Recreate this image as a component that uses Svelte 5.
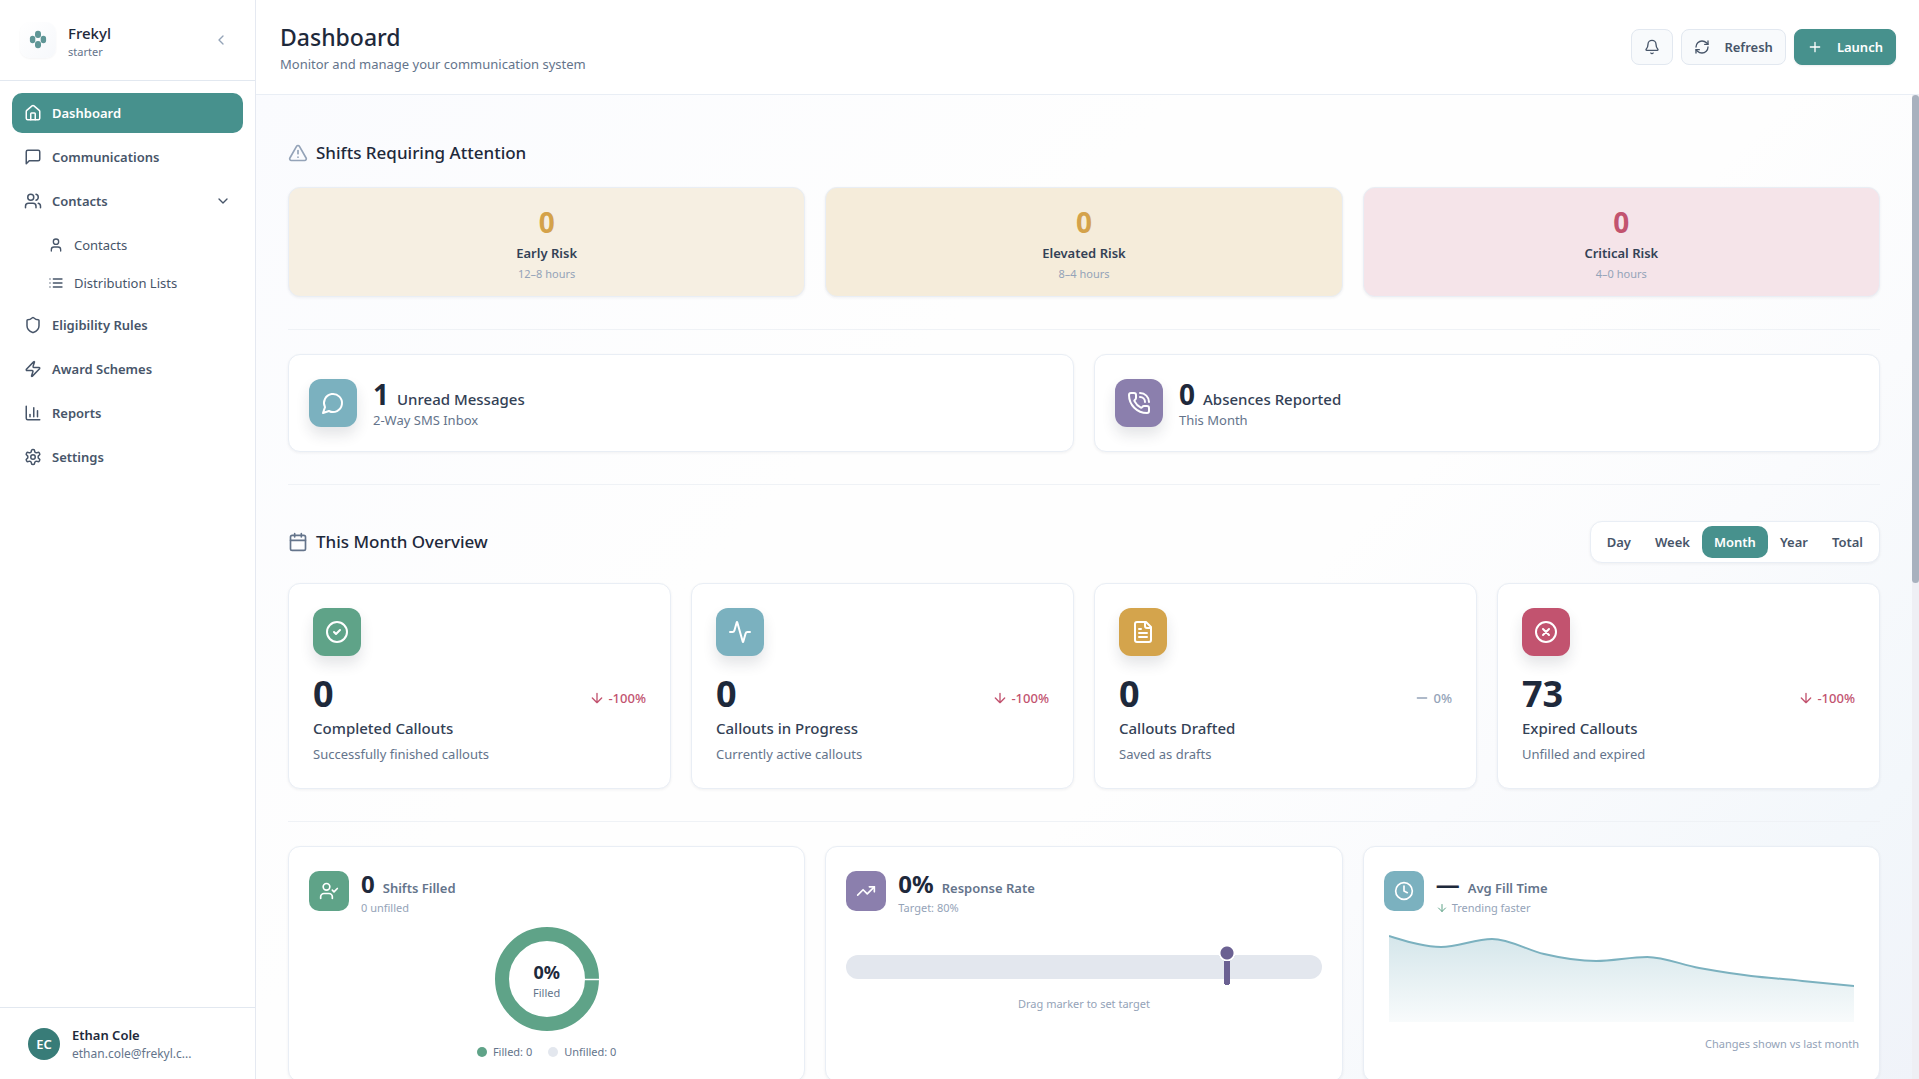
<script lang="ts">
	const icons: Record<string, string> = {
		home: '<path d="M15 21v-8a1 1 0 0 0-1-1h-4a1 1 0 0 0-1 1v8"/><path d="M3 10a2 2 0 0 1 .709-1.528l7-5.999a2 2 0 0 1 2.582 0l7 5.999A2 2 0 0 1 21 10v9a2 2 0 0 1-2 2H5a2 2 0 0 1-2-2z"/>',
		message: '<path d="M21 15a2 2 0 0 1-2 2H7l-4 4V5a2 2 0 0 1 2-2h14a2 2 0 0 1 2 2z"/>',
		users: '<path d="M16 21v-2a4 4 0 0 0-4-4H6a4 4 0 0 0-4 4v2"/><circle cx="9" cy="7" r="4"/><path d="M22 21v-2a4 4 0 0 0-3-3.87"/><path d="M16 3.13a4 4 0 0 1 0 7.75"/>',
		user: '<path d="M19 21v-2a4 4 0 0 0-4-4H9a4 4 0 0 0-4 4v2"/><circle cx="12" cy="7" r="4"/>',
		list: '<path d="M3 12h.01M3 18h.01M3 6h.01M8 12h13M8 18h13M8 6h13"/>',
		shield: '<path d="M20 13c0 5-3.5 7.5-7.66 8.95a1 1 0 0 1-.67-.01C7.5 20.5 4 18 4 13V6a1 1 0 0 1 1-1c2 0 4.5-1.2 6.24-2.72a1.17 1.17 0 0 1 1.52 0C14.51 3.81 17 5 19 5a1 1 0 0 1 1 1z"/>',
		zap: '<path d="M4 14a1 1 0 0 1-.78-1.63l9.9-10.2a.5.5 0 0 1 .86.46l-1.92 6.02A1 1 0 0 0 13 10h7a1 1 0 0 1 .78 1.63l-9.9 10.2a.5.5 0 0 1-.86-.46l1.92-6.02A1 1 0 0 0 11 14z"/>',
		chart: '<path d="M3 3v16a2 2 0 0 0 2 2h16"/><path d="M18 17V9"/><path d="M13 17V5"/><path d="M8 17v-3"/>',
		settings: '<path d="M12.22 2h-.44a2 2 0 0 0-2 2v.18a2 2 0 0 1-1 1.73l-.43.25a2 2 0 0 1-2 0l-.15-.08a2 2 0 0 0-2.73.73l-.22.38a2 2 0 0 0 .73 2.73l.15.1a2 2 0 0 1 1 1.72v.51a2 2 0 0 1-1 1.74l-.15.09a2 2 0 0 0-.73 2.73l.22.38a2 2 0 0 0 2.73.73l.15-.08a2 2 0 0 1 2 0l.43.25a2 2 0 0 1 1 1.73V20a2 2 0 0 0 2 2h.44a2 2 0 0 0 2-2v-.18a2 2 0 0 1 1-1.73l.43-.25a2 2 0 0 1 2 0l.15.08a2 2 0 0 0 2.73-.73l.22-.39a2 2 0 0 0-.73-2.73l-.15-.08a2 2 0 0 1-1-1.74v-.5a2 2 0 0 1 1-1.74l.15-.09a2 2 0 0 0 .73-2.73l-.22-.38a2 2 0 0 0-2.73-.73l-.15.08a2 2 0 0 1-2 0l-.43-.25a2 2 0 0 1-1-1.73V4a2 2 0 0 0-2-2z"/><circle cx="12" cy="12" r="3"/>',
		bell: '<path d="M10.268 21a2 2 0 0 0 3.464 0"/><path d="M3.262 15.326A1 1 0 0 0 4 17h16a1 1 0 0 0 .74-1.673C19.41 13.956 18 12.499 18 8A6 6 0 0 0 6 8c0 4.499-1.411 5.956-2.738 7.326"/>',
		refresh: '<path d="M3 12a9 9 0 0 1 9-9 9.75 9.75 0 0 1 6.74 2.74L21 8"/><path d="M21 3v5h-5"/><path d="M21 12a9 9 0 0 1-9 9 9.75 9.75 0 0 1-6.74-2.74L3 16"/><path d="M8 16H3v5"/>',
		plus: '<path d="M5 12h14M12 5v14"/>',
		alert: '<path d="m21.73 18-8-14a2 2 0 0 0-3.48 0l-8 14A2 2 0 0 0 4 21h16a2 2 0 0 0 1.73-3"/><path d="M12 9v4"/><path d="M12 17h.01"/>',
		bubble: '<path d="M7.9 20A9 9 0 1 0 4 16.1L2 22Z"/>',
		phone: '<path d="M13 2a9 9 0 0 1 9 9"/><path d="M13 6a5 5 0 0 1 5 5"/><path d="M13.832 16.568a1 1 0 0 0 1.213-.303l.355-.465A2 2 0 0 1 17 15h3a2 2 0 0 1 2 2v3a2 2 0 0 1-2 2A18 18 0 0 1 2 4a2 2 0 0 1 2-2h3a2 2 0 0 1 2 2v3a2 2 0 0 1-.8 1.6l-.468.351a1 1 0 0 0-.292 1.233 14 14 0 0 0 6.392 6.384"/>',
		calendar: '<path d="M8 2v4M16 2v4"/><rect width="18" height="18" x="3" y="4" rx="2"/><path d="M3 10h18"/>',
		check: '<circle cx="12" cy="12" r="10"/><path d="m9 12 2 2 4-4"/>',
		activity: '<path d="M22 12h-2.48a2 2 0 0 0-1.93 1.46l-2.35 8.36a.25.25 0 0 1-.48 0L9.24 2.18a.25.25 0 0 0-.48 0l-2.35 8.36A2 2 0 0 1 4.49 12H2"/>',
		file: '<path d="M15 2H6a2 2 0 0 0-2 2v16a2 2 0 0 0 2 2h12a2 2 0 0 0 2-2V7Z"/><path d="M14 2v4a2 2 0 0 0 2 2h4"/><path d="M10 9H8M16 13H8M16 17H8"/>',
		cancel: '<circle cx="12" cy="12" r="10"/><path d="m15 9-6 6M9 9l6 6"/>',
		userCheck: '<path d="m16 11 2 2 4-4"/><path d="M16 21v-2a4 4 0 0 0-4-4H6a4 4 0 0 0-4 4v2"/><circle cx="9" cy="7" r="4"/>',
		trend: '<path d="M16 7h6v6"/><path d="m22 7-8.5 8.5-5-5L2 17"/>',
		clock: '<circle cx="12" cy="12" r="10"/><path d="M12 6v6l4 2"/>',
		down: '<path d="M12 5v14M19 12l-7 7-7-7"/>',
		minus: '<path d="M5 12h14"/>',
		chevronLeft: '<path d="m15 18-6-6 6-6"/>',
		chevronDown: '<path d="m6 9 6 6 6-6"/>'
	};

	const topNav = [
		{ label: 'Dashboard', icon: 'home' },
		{ label: 'Communications', icon: 'message' }
	];
	const contactsNav = [
		{ label: 'Contacts', icon: 'user' },
		{ label: 'Distribution Lists', icon: 'list' }
	];
	const bottomNav = [
		{ label: 'Eligibility Rules', icon: 'shield' },
		{ label: 'Award Schemes', icon: 'zap' },
		{ label: 'Reports', icon: 'chart' },
		{ label: 'Settings', icon: 'settings' }
	];

	const risks = [
		{ level: 'early', label: 'Early Risk', window: '12–8 hours', count: 0 },
		{ level: 'elevated', label: 'Elevated Risk', window: '8–4 hours', count: 0 },
		{ level: 'critical', label: 'Critical Risk', window: '4–0 hours', count: 0 }
	];

	const summaries = [
		{ count: 1, label: 'Unread Messages', note: '2-Way SMS Inbox', icon: 'bubble', color: 'blue' },
		{ count: 0, label: 'Absences Reported', note: 'This Month', icon: 'phone', color: 'purple' }
	];

	const stats = [
		{ count: 0, label: 'Completed Callouts', note: 'Successfully finished callouts', icon: 'check', color: 'green', change: -100 },
		{ count: 0, label: 'Callouts in Progress', note: 'Currently active callouts', icon: 'activity', color: 'blue', change: -100 },
		{ count: 0, label: 'Callouts Drafted', note: 'Saved as drafts', icon: 'file', color: 'gold', change: 0 },
		{ count: 73, label: 'Expired Callouts', note: 'Unfilled and expired', icon: 'cancel', color: 'red', change: -100 }
	];

	const periods = ['Day', 'Week', 'Month', 'Year', 'Total'];

	let activeNav = $state('Dashboard');
	let period = $state('Month');
	let contactsOpen = $state(true);
	let target = $state(80);

	const trendLine =
		'M0 11C17 16 35 22 52 22S86 14 103 14S138 25 155 29S190 36 207 36S241 32 258 32S293 40 310 43S345 49 362 51S396 54 413 56L465 61';
</script>

{#snippet icon(name: string, size: number)}
	<svg
		class="icon"
		width={size}
		height={size}
		viewBox="0 0 24 24"
		fill="none"
		stroke="currentColor"
		stroke-width="2"
		stroke-linecap="round"
		stroke-linejoin="round"
		aria-hidden="true"
	>
		{@html icons[name]}
	</svg>
{/snippet}

{#snippet navItem(item: { label: string; icon: string })}
	<button class="nav-item" class:active={activeNav === item.label} onclick={() => (activeNav = item.label)}>
		{@render icon(item.icon, 18)}
		<span>{item.label}</span>
	</button>
{/snippet}

<div class="app">
	<aside class="sidebar">
		<div class="brand">
			<div class="logo">
				<svg width="20" height="20" viewBox="0 0 20 20" aria-hidden="true">
					<g fill="#5f9696">
						<rect x="7" y="0.8" width="6" height="7.2" rx="2.9" />
						<rect x="7" y="11" width="6" height="7.2" rx="2.9" />
						<rect x="1.9" y="5.8" width="5.4" height="7.4" rx="2.7" />
						<rect x="12.7" y="5.8" width="5.4" height="7.4" rx="2.7" />
					</g>
				</svg>
			</div>
			<div class="brand-text">
				<strong>Frekyl</strong>
				<small>starter</small>
			</div>
			<button class="collapse" aria-label="Collapse sidebar">{@render icon('chevronLeft', 16)}</button>
		</div>

		<nav>
			{#each topNav as item}
				{@render navItem(item)}
			{/each}
			<button class="nav-item" aria-expanded={contactsOpen} onclick={() => (contactsOpen = !contactsOpen)}>
				{@render icon('users', 18)}
				<span>Contacts</span>
				{@render icon('chevronDown', 16)}
			</button>
			{#if contactsOpen}
				<div class="subnav">
					{#each contactsNav as item}
						<button class="sub-item">
							{@render icon(item.icon, 16)}
							<span>{item.label}</span>
						</button>
					{/each}
				</div>
			{/if}
			{#each bottomNav as item}
				{@render navItem(item)}
			{/each}
		</nav>

		<div class="account">
			<div class="avatar">EC</div>
			<div class="account-text">
				<strong>Ethan Cole</strong>
				<small>ethan.cole@frekyl.c...</small>
			</div>
		</div>
	</aside>

	<div class="page">
		<header>
			<div>
				<h1>Dashboard</h1>
				<p>Monitor and manage your communication system</p>
			</div>
			<div class="actions">
				<button class="btn" aria-label="Notifications">{@render icon('bell', 16)}</button>
				<button class="btn">{@render icon('refresh', 16)}Refresh</button>
				<button class="btn primary">{@render icon('plus', 16)}Launch</button>
			</div>
		</header>

		<div class="viewport">
			<main>
				<section>
					<div class="section-head">
						<h2 class="muted-icon">{@render icon('alert', 20)}Shifts Requiring Attention</h2>
					</div>
					<div class="grid three">
						{#each risks as risk}
							<div class="card risk {risk.level}">
								<strong>{risk.count}</strong>
								<span>{risk.label}</span>
								<small>{risk.window}</small>
							</div>
						{/each}
					</div>
				</section>

				<section class="divided">
					<div class="grid two">
						{#each summaries as item}
							<div class="card summary">
								<div class="tile raised {item.color}">{@render icon(item.icon, 24)}</div>
								<div>
									<div class="figure"><strong>{item.count}</strong><span>{item.label}</span></div>
									<p>{item.note}</p>
								</div>
							</div>
						{/each}
					</div>
				</section>

				<section class="divided overview">
					<div class="section-head">
						<h2>{@render icon('calendar', 20)}This Month Overview</h2>
						<div class="periods">
							{#each periods as name}
								<button class:active={period === name} onclick={() => (period = name)}>{name}</button>
							{/each}
						</div>
					</div>
					<div class="grid four">
						{#each stats as stat}
							<div class="card stat">
								<div class="tile raised {stat.color}">{@render icon(stat.icon, 24)}</div>
								<div class="stat-row">
									<strong>{stat.count}</strong>
									<span class="change" class:drop={stat.change < 0}>
										{@render icon(stat.change < 0 ? 'down' : 'minus', 16)}{stat.change}%
									</span>
								</div>
								<h3>{stat.label}</h3>
								<p>{stat.note}</p>
							</div>
						{/each}
					</div>
				</section>

				<section class="divided">
					<div class="grid three">
						<div class="card metric">
							<div class="metric-head">
								<div class="tile small green">{@render icon('userCheck', 20)}</div>
								<div>
									<div class="figure"><strong>0</strong><span>Shifts Filled</span></div>
									<small>0 unfilled</small>
								</div>
							</div>
							<div class="donut">
								<svg width="104" height="104" viewBox="0 0 104 104" aria-hidden="true">
									<circle cx="52" cy="52" r="45" fill="none" stroke="#5fa388" stroke-width="14" />
									<path d="M89 52.5h15" stroke="#fff" stroke-width="1.5" />
								</svg>
								<div class="donut-label">
									<strong>0%</strong>
									<small>Filled</small>
								</div>
							</div>
							<div class="legend">
								<span><i class="dot filled"></i>Filled: 0</span>
								<span><i class="dot"></i>Unfilled: 0</span>
							</div>
						</div>

						<div class="card metric">
							<div class="metric-head">
								<div class="tile small purple">{@render icon('trend', 20)}</div>
								<div>
									<div class="figure"><strong>0%</strong><span>Response Rate</span></div>
									<small>Target: {target}%</small>
								</div>
							</div>
							<div class="track">
								<input type="range" min="0" max="100" bind:value={target} aria-label="Response rate target" />
							</div>
							<small class="hint">Drag marker to set target</small>
						</div>

						<div class="card metric">
							<div class="metric-head">
								<div class="tile small blue">{@render icon('clock', 20)}</div>
								<div>
									<div class="figure"><strong>—</strong><span>Avg Fill Time</span></div>
									<small class="trending">{@render icon('down', 12)}Trending faster</small>
								</div>
							</div>
							<svg class="area" viewBox="0 0 465 97" preserveAspectRatio="none" aria-hidden="true">
								<defs>
									<linearGradient id="fill" x1="0" y1="0" x2="0" y2="1">
										<stop offset="0" stop-color="#7bb1bf" stop-opacity="0.32" />
										<stop offset="1" stop-color="#7bb1bf" stop-opacity="0.05" />
									</linearGradient>
								</defs>
								<path d="{trendLine}V97H0Z" fill="url(#fill)" />
								<path d={trendLine} fill="none" stroke="#7bb1bf" stroke-width="2" />
							</svg>
							<small class="hint end">Changes shown vs last month</small>
						</div>
					</div>
				</section>
			</main>
			<div class="scrollbar"><div class="thumb"></div></div>
		</div>
	</div>
</div>

<style>
	:global(body) {
		margin: 0;
		font-family: 'Segoe UI', 'Noto Sans', sans-serif;
		font-size: 13px;
		line-height: 20px;
		color: #1e293b;
	}

	.app {
		display: flex;
		height: 100vh;
		overflow: hidden;
		background: #fff;
	}

	.app * {
		box-sizing: border-box;
	}

	h1,
	h2,
	h3,
	p {
		margin: 0;
	}

	strong,
	small {
		display: block;
	}

	small {
		font-size: 11px;
		line-height: 18px;
	}

	button {
		border: 0;
		padding: 0;
		background: none;
		font: inherit;
		color: inherit;
		cursor: pointer;
	}

	.icon {
		flex: none;
		display: block;
	}

	/* Sidebar */
	.sidebar {
		flex: none;
		display: flex;
		flex-direction: column;
		width: 256px;
		border-right: 1px solid #e5e9f1;
	}

	.brand {
		display: flex;
		align-items: center;
		gap: 12px;
		height: 81px;
		padding: 0 26px 0 20px;
		border-bottom: 1px solid #e2e8f0;
	}

	.logo {
		display: grid;
		place-items: center;
		width: 36px;
		height: 36px;
		border-radius: 10px;
		background: linear-gradient(135deg, #fff, #f6f8fb);
		box-shadow: 0 1px 2px rgba(30, 41, 59, 0.05);
	}

	.brand-text {
		flex: 1;
		padding-top: 4px;
	}

	.brand strong {
		font-size: 15px;
		font-weight: 500;
		line-height: 20px;
	}

	.brand small {
		color: #64748b;
	}

	.collapse {
		color: #94a3b8;
	}

	nav {
		flex: 1;
		display: flex;
		flex-direction: column;
		gap: 4px;
		padding: 12px;
	}

	.nav-item {
		display: flex;
		align-items: center;
		gap: 10px;
		height: 40px;
		padding: 0 12px;
		border-radius: 10px;
		font-weight: 600;
		color: #475569;
		text-align: left;
	}

	.nav-item span {
		flex: 1;
	}

	.nav-item.active {
		background: #47918d;
		color: #fff;
	}

	.subnav {
		display: flex;
		flex-direction: column;
		gap: 2px;
		padding: 2px 0 0 24px;
	}

	.sub-item {
		display: flex;
		align-items: center;
		gap: 10px;
		height: 36px;
		padding: 0 12px;
		color: #475569;
	}

	.account {
		display: flex;
		align-items: center;
		gap: 12px;
		padding: 17px 28px 16px;
		border-top: 1px solid #e2e8f0;
	}

	.avatar {
		flex: none;
		display: grid;
		place-items: center;
		width: 32px;
		height: 32px;
		border-radius: 50%;
		background: #387c78;
		font-weight: 600;
		color: #fff;
	}

	.account strong {
		font-weight: 600;
	}

	.account small {
		font-size: 12px;
		color: #64748b;
		white-space: nowrap;
	}

	/* Header */
	.page {
		flex: 1;
		display: flex;
		flex-direction: column;
		min-width: 0;
	}

	header {
		display: flex;
		align-items: center;
		justify-content: space-between;
		padding: 20px 23px 20px 24px;
		border-bottom: 1px solid #e9eef5;
	}

	h1 {
		font-size: 23px;
		font-weight: 500;
		line-height: 34px;
	}

	header p {
		color: #64748b;
	}

	.actions {
		display: flex;
		gap: 8px;
	}

	.btn {
		display: flex;
		align-items: center;
		gap: 14px;
		height: 36px;
		padding: 0 12px;
		border: 1px solid #e2e8f0;
		border-radius: 8px;
		background: #f8fafc;
		font-weight: 600;
		color: #475569;
	}

	.btn.primary {
		border-color: #47918d;
		background: #47918d;
		color: #fff;
		box-shadow: 0 1px 2px rgba(30, 41, 59, 0.08);
	}

	/* Content */
	.viewport {
		flex: 1;
		display: flex;
		min-height: 0;
		background: linear-gradient(
			135deg,
			#fafbfe 0%,
			#fefefe 35%,
			#fefefe 58%,
			#fafbfd 72%,
			#f3f7fb 88%,
			#f0f3f9 100%
		);
	}

	main {
		flex: 1;
		min-width: 0;
		padding: 44px 32px 32px;
		overflow: hidden;
	}

	.scrollbar {
		width: 7px;
		background: #eeeff4;
	}

	.thumb {
		height: 49.6%;
		border-radius: 4px;
		background: #a8b1be;
	}

	.divided {
		margin-top: 32px;
		padding-top: 24px;
		border-top: 1px solid #eff2f6;
	}

	.overview {
		padding-top: 36px;
	}

	.section-head {
		display: flex;
		align-items: center;
		justify-content: space-between;
		margin-bottom: 20px;
	}

	h2 {
		display: flex;
		align-items: center;
		gap: 8px;
		font-size: 17px;
		font-weight: 500;
		line-height: 28px;
	}

	h2 .icon {
		color: #64748b;
	}

	.muted-icon .icon {
		color: #94a3b8;
	}

	.grid {
		display: grid;
		gap: 20px;
	}

	.two {
		grid-template-columns: repeat(2, 1fr);
	}

	.three {
		grid-template-columns: repeat(3, 1fr);
	}

	.four {
		grid-template-columns: repeat(4, 1fr);
	}

	.card {
		border: 1px solid #e9eef5;
		border-radius: 12px;
		background: #fff;
		box-shadow: 0 1px 3px rgba(30, 41, 59, 0.06);
	}

	.risk {
		padding: 16px 16px 13px;
		text-align: center;
	}

	.risk strong {
		font-size: 28px;
		line-height: 37px;
	}

	.risk span {
		display: block;
		font-weight: 600;
		line-height: 24px;
		color: #334155;
	}

	.risk small {
		color: #94a3b8;
	}

	.early {
		background: #f6efe2;
	}

	.elevated {
		background: #f5ecda;
	}

	.early strong,
	.elevated strong {
		color: #d4a24a;
	}

	.critical {
		background: #f5e4e9;
	}

	.critical strong {
		color: #c2536f;
	}

	.tile {
		flex: none;
		display: grid;
		place-items: center;
		width: 48px;
		height: 48px;
		border-radius: 12px;
		color: #fff;
	}

	.tile.small {
		width: 40px;
		height: 40px;
		border-radius: 10px;
	}

	.raised {
		box-shadow: 0 8px 14px rgba(30, 41, 59, 0.12);
	}

	.blue {
		background: #7bb1bf;
	}

	.purple {
		background: #8b7fad;
	}

	.green {
		background: #5fa388;
	}

	.gold {
		background: #d4a44c;
	}

	.red {
		background: #c2536f;
	}

	.figure {
		display: flex;
		align-items: baseline;
		gap: 8px;
	}

	.summary {
		display: flex;
		align-items: center;
		gap: 16px;
		padding: 20px;
		min-height: 98px;
	}

	.summary .figure {
		padding-top: 2px;
	}

	.summary strong {
		font-size: 28px;
		line-height: 32px;
	}

	.summary span {
		font-size: 15px;
		font-weight: 500;
		color: #334155;
	}

	.summary p,
	.stat p {
		color: #64748b;
	}

	.periods {
		display: flex;
		padding: 4px;
		border: 1px solid #e9eef5;
		border-radius: 12px;
		background: #fff;
		box-shadow: 0 1px 3px rgba(30, 41, 59, 0.06);
	}

	.periods button {
		height: 32px;
		padding: 0 12px;
		border-radius: 10px;
		font-weight: 600;
		color: #475569;
	}

	.periods .active {
		background: #47918d;
		color: #fff;
	}

	.stat {
		padding: 24px;
	}

	.stat-row {
		display: flex;
		align-items: flex-end;
		justify-content: space-between;
		margin-top: 16px;
	}

	.stat-row strong {
		font-size: 36px;
		line-height: 44px;
	}

	.change {
		display: flex;
		align-items: center;
		gap: 3px;
		padding-bottom: 8px;
		font-weight: 500;
		color: #94a3b8;
	}

	.drop {
		color: #c2536f;
	}

	h3 {
		margin-bottom: 4px;
		font-size: 15px;
		font-weight: 500;
		line-height: 24px;
		color: #334155;
	}

	.metric {
		display: flex;
		flex-direction: column;
		padding: 24px 20px 20px;
		min-height: 234px;
	}

	.metric-head {
		display: flex;
		gap: 12px;
	}

	.metric strong {
		font-size: 24px;
		line-height: 26px;
	}

	.metric .figure span {
		font-weight: 600;
		color: #64748b;
	}

	.metric small {
		color: #94a3b8;
	}

	.metric .figure {
		margin-bottom: 1px;
	}

	.donut {
		display: grid;
		place-items: center;
		margin-top: 10px;
	}

	.donut > * {
		grid-area: 1 / 1;
	}

	.donut-label {
		padding-top: 3px;
		text-align: center;
	}

	.donut strong {
		font-size: 18px;
		line-height: 24px;
	}

	.donut small {
		color: #64748b;
	}

	.legend {
		display: flex;
		justify-content: center;
		gap: 16px;
		margin-top: 12px;
		font-size: 11px;
		line-height: 18px;
		color: #64748b;
	}

	.legend span {
		display: flex;
		align-items: center;
		gap: 6px;
	}

	.dot {
		width: 10px;
		height: 10px;
		border-radius: 50%;
		background: #e3e7ee;
	}

	.dot.filled {
		background: #5fa388;
	}

	.track {
		position: relative;
		height: 24px;
		margin-top: 38px;
		border-radius: 12px;
		background: #e3e7ee;
	}

	/* the knob overhangs the bar on both sides, so 0 and 100 sit on its ends */
	.track input {
		position: absolute;
		top: -10px;
		left: -8px;
		width: calc(100% + 16px);
		height: 40px;
		margin: 0;
		background: none;
		appearance: none;
	}

	.track input::-webkit-slider-thumb {
		width: 16px;
		height: 40px;
		background:
			radial-gradient(circle at 8px 8px, #6b6192 6px, #fff 7px, #fff 8px, transparent 8px),
			radial-gradient(circle at 8px 37px, #6b6192 3px, transparent 3px),
			linear-gradient(#6b6192, #6b6192) 5px 8px / 6px 29px no-repeat;
		appearance: none;
	}

	.hint {
		margin-top: 16px;
		text-align: center;
	}

	.hint.end {
		margin-top: 13px;
		text-align: right;
	}

	.trending {
		display: flex;
		align-items: center;
		gap: 4px;
	}

	.trending .icon {
		color: #5fa388;
	}

	.area {
		display: block;
		width: calc(100% - 10px);
		height: 97px;
		margin: 8px 5px 0;
	}
</style>
